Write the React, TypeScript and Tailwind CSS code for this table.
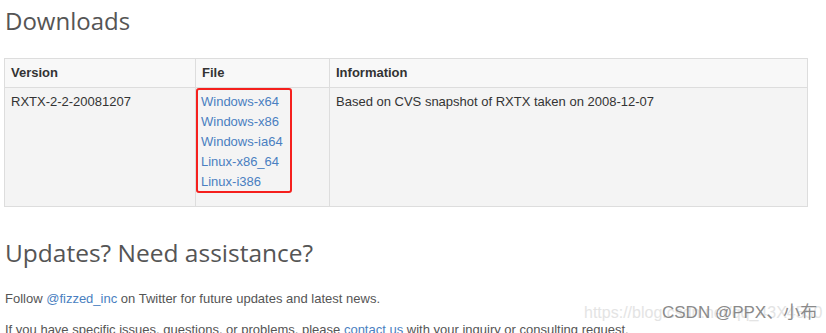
import React from "react";

const files = ["Windows-x64", "Windows-x86", "Windows-ia64", "Linux-x86_64", "Linux-i386"];

export default function App() {
  return (
    <div className="relative w-[826px] h-[333px] overflow-hidden bg-white pl-[4px] text-[#333]" style={{ fontFamily: '"Liberation Sans", Arial, sans-serif' }}>
      <h1 className="text-[24px] leading-[40px] pt-[1px] pl-[1px] text-[#555] font-normal" style={{ fontFamily: '"Open Sans", sans-serif' }}>
        Downloads
      </h1>
      <table className="mt-[17px] w-[804px] border-collapse text-[13px] table-fixed">
        <colgroup>
          <col className="w-[191px]" />
          <col className="w-[134px]" />
          <col />
        </colgroup>
        <thead>
          <tr className="h-[29px] bg-[#f8f8f8]">
            <th className="border border-[#ddd] px-[6px] text-left font-bold align-middle">Version</th>
            <th className="border border-[#ddd] px-[6px] text-left font-bold align-middle">File</th>
            <th className="border border-[#ddd] px-[6px] text-left font-bold align-middle">Information</th>
          </tr>
        </thead>
        <tbody>
          <tr className="h-[119px] bg-[#f4f4f4] align-top">
            <td className="border border-[#ddd] px-[6px] pt-[4px] leading-[20px]">RXTX-2-2-20081207</td>
            <td className="border border-[#ddd] p-0">
              <div className="ml-0 mt-0 w-[96px] h-[105px] rounded-[3px] border-2 border-[#f5201d] pl-[3px] pt-[2px] leading-[20px]">
                {files.map((f) => (
                  <div key={f} className="text-[#4a7fc1]">{f}</div>
                ))}
              </div>
            </td>
            <td className="border border-[#ddd] px-[6px] pt-[4px] leading-[20px]">Based on CVS snapshot of RXTX taken on 2008-12-07</td>
          </tr>
        </tbody>
      </table>
      <h2 className="mt-[26px] pl-[1px] text-[24.5px] leading-[40px] text-[#555] font-normal" style={{ fontFamily: '"Open Sans", sans-serif' }}>
        Updates? Need assistance?
      </h2>
      <p className="mt-[16px] pl-[1px] text-[13px] leading-[20px] text-[#555]">
        Follow <span className="text-[#4a7fc1]">@fizzed_inc</span> on Twitter for future updates and latest news.
      </p>
      <p className="mt-[11px] pl-[1px] text-[13px] leading-[20px] text-[#555]">
        If you have specific issues, questions, or problems, please <span className="text-[#4a7fc1]">contact us</span> with your inquiry or consulting request.
      </p>
      <div className="absolute left-[584px] top-[303px] text-[16px] leading-[20px] text-[#e4e4e4] whitespace-nowrap" style={{ fontFamily: '"Liberation Sans", Arial, "Noto Sans CJK SC", sans-serif' }}>
        https://blog.csdn.net/qq_43X4550
      </div>
      <div className="absolute left-[662px] top-[303px] text-[17px] leading-[20px] text-[#8a8a8a] whitespace-nowrap" style={{ fontFamily: '"Liberation Sans", Arial, "Noto Sans CJK SC", sans-serif' }}>
        CSDN @PPX、小布
      </div>
    </div>
  );
}
